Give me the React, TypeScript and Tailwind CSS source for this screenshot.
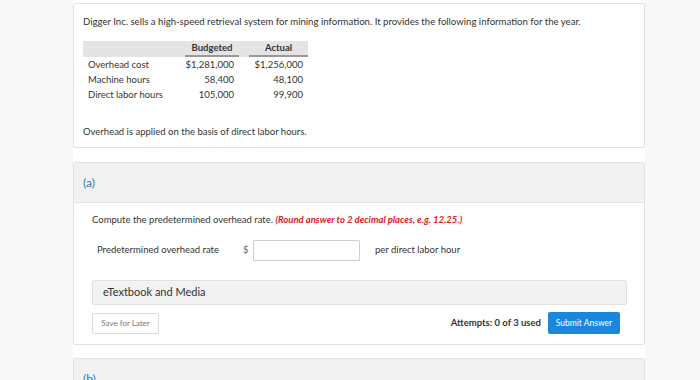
export default function App() {
  return (
    <div className="h-[380px] w-[700px] overflow-hidden bg-[#f8f8f8] font-['Lato','Noto_Sans',sans-serif] text-[#333]">
      <div className="ml-[73px] w-[572px] bg-white pt-[3px]">
        {/* Problem statement */}
        <div className="h-[145px] rounded-[2px] border border-[#e2e2e2] pl-[9px] pt-[12px]">
          <p className="text-[9.6px] leading-[12px]">
            Digger Inc. sells a high-speed retrieval system for mining information. It provides the following information for the year.
          </p>
          <div className="mt-[13px] w-[225px] text-[9.5px] leading-[15px]">
            <div className="flex h-[16px] items-end bg-[#e4e4e4]">
              <div className="w-[102px]" />
              <div className="w-[54px] border-b-2 border-[#999] text-center font-bold leading-[14px]">Budgeted</div>
              <div className="w-[10px]" />
              <div className="w-[59px] border-b-2 border-[#999] text-center font-bold leading-[14px]">Actual</div>
            </div>
            {[
              ["Overhead cost", "$1,281,000", "$1,256,000"],
              ["Machine hours", "58,400", "48,100"],
              ["Direct labor hours", "105,000", "99,900"],
            ].map(([label, b, a]) => (
              <div key={label} className="flex">
                <div className="w-[102px] pl-[5px]">{label}</div>
                <div className="w-[49px] text-right">{b}</div>
                <div className="w-[74px] pr-[5px] text-right">{a}</div>
              </div>
            ))}
          </div>
          <p className="mt-[24px] text-[9.5px] leading-[12px]">Overhead is applied on the basis of direct labor hours.</p>
        </div>

        {/* Part (a) */}
        <div className="mt-[14px] rounded-[2px] border border-[#e2e2e2]">
          <div className="flex h-[39px] items-center bg-[#f2f2f2] pl-[9px] text-[12px] text-[#2a7ab8]">(a)</div>
          <div className="h-[142px] border-t border-[#e2e2e2] bg-white pl-[18px] pr-[17px] pt-[11px]">
            <p className="text-[9.5px] leading-[12px]">
              Compute the predetermined overhead rate.{" "}
              <span className="font-bold italic text-[#e02020]">(Round answer to 2 decimal places, e.g. 12.25.)</span>
            </p>
            <div className="mt-[14px] flex items-center text-[9.5px]">
              <span className="ml-[5px] w-[146px]">Predetermined overhead rate</span>
              <span className="w-[10px] text-[#666]">$</span>
              <div className="h-[21px] w-[107px] rounded-[1px] border border-[#cfcfcf] bg-white" />
              <span className="ml-[15px]">per direct labor hour</span>
            </div>
            <div className="mt-[19px] flex h-[25px] items-center rounded-[2px] border border-[#e0e0e0] bg-[#f2f2f2] pl-[10px] text-[11px]">
              eTextbook and Media
            </div>
            <div className="mt-[7px] flex items-center justify-between pr-[7px]">
              <button className="h-[21px] w-[67px] rounded-[2px] border border-[#dcdcdc] bg-white text-[8px] text-[#777]">
                Save for Later
              </button>
              <div className="flex items-center">
                <span className="mr-[7px] text-[9.5px] font-bold">Attempts: 0 of 3 used</span>
                <button className="h-[22px] w-[72px] rounded-[2px] bg-[#1a87dc] text-[8.5px] text-white">Submit Answer</button>
              </div>
            </div>
          </div>
        </div>

        {/* Part (b) */}
        <div className="mt-[13px] rounded-[2px] border border-[#e2e2e2]">
          <div className="flex h-[39px] items-center bg-[#f2f2f2] pl-[9px] text-[12px] text-[#2a7ab8]">(b)</div>
        </div>
      </div>
    </div>
  );
}
